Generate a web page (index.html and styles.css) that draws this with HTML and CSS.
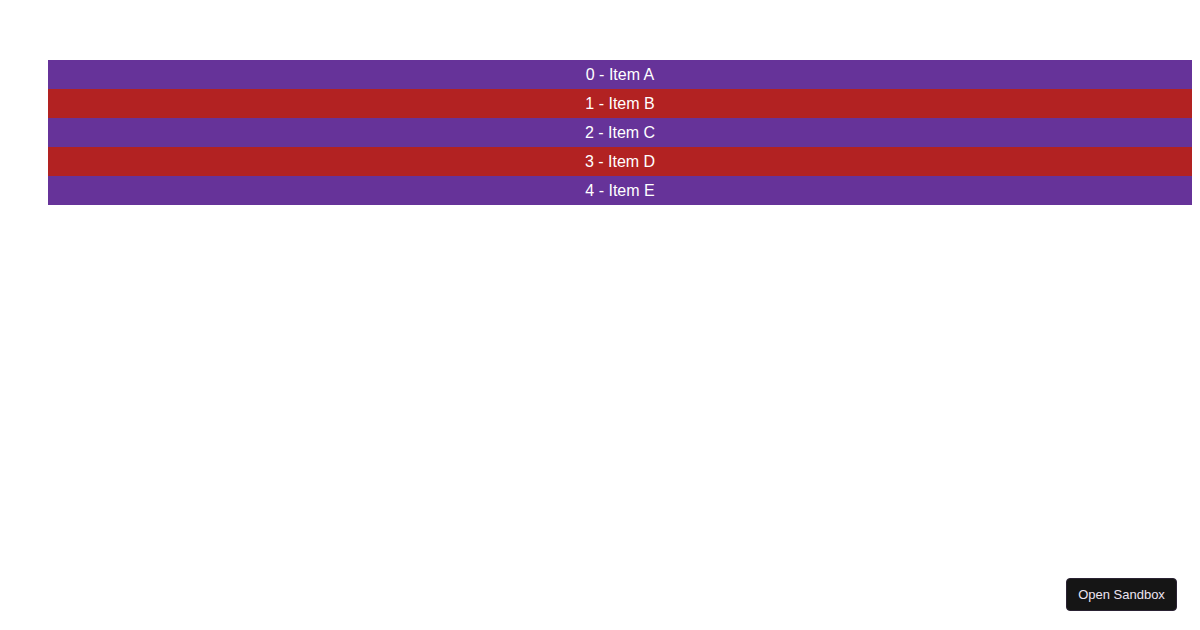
FILE: index.html
```html
<!DOCTYPE html>
<html>
<head>
<meta charset="utf-8">
<link rel="stylesheet" href="styles.css">
</head>
<body>
<ul class="list">
  <li class="item odd">0 - Item A</li>
  <li class="item even">1 - Item B</li>
  <li class="item odd">2 - Item C</li>
  <li class="item even">3 - Item D</li>
  <li class="item odd">4 - Item E</li>
</ul>
<button class="sandbox">Open Sandbox</button>
</body>
</html>
```
FILE: styles.css
```css
html, body {
  margin: 0;
  background: #ffffff;
}
body {
  padding: 60px 8px 0 8px;
  font-family: "Liberation Sans", Arial, sans-serif;
}
.list {
  list-style: none;
  margin: 0;
  padding: 0 0 0 40px;
}
.item {
  height: 29px;
  line-height: 29px;
  text-align: center;
  color: #ffffff;
  font-size: 16px;
}
.odd { background: #663399; }
.even { background: #b22222; }
.sandbox {
  position: fixed;
  right: 23px;
  bottom: 19px;
  width: 111px;
  height: 33px;
  padding: 0;
  background: #151515;
  color: #ece4f2;
  border: 1px solid #2a2233;
  border-radius: 4px;
  font-family: "Liberation Sans", Arial, sans-serif;
  font-size: 13px;
}
```
